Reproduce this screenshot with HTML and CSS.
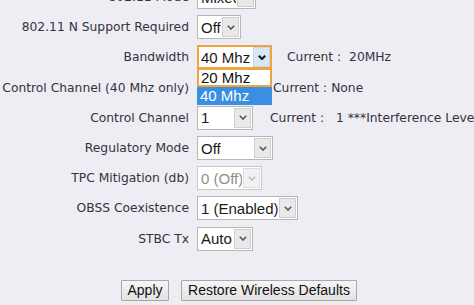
FILE: index.html
```html
<!DOCTYPE html>
<html>
<head>
<meta charset="utf-8">
<link rel="stylesheet" href="styles.css">
</head>
<body>
<div class="form">
  <div class="label">802.11 Mode</div>
  <div class="ctl"><div class="sel w59"><span class="st">Mixed</span><span class="sb"><svg width="8" height="5" viewBox="0 0 8 5"><polyline points="0.8,0.8 4,4 7.2,0.8"/></svg></span></div></div>

  <div class="label">802.11 N Support Required</div>
  <div class="ctl"><div class="sel w44"><span class="st">Off</span><span class="sb"><svg width="8" height="5" viewBox="0 0 8 5"><polyline points="0.8,0.8 4,4 7.2,0.8"/></svg></span></div></div>

  <div class="label">Bandwidth</div>
  <div class="ctl">
    <div class="selwrap">
      <div class="sel w75 focus"><span class="st">40 Mhz</span><span class="sb"><svg width="8" height="5" viewBox="0 0 8 5"><polyline points="0.8,0.8 4,4 7.2,0.8"/></svg></span></div>
      <div class="menu">
        <div class="opt hov">20 Mhz</div>
        <div class="opt sel-opt">40 Mhz</div>
      </div>
    </div>
    <span class="cur g15">Current :&nbsp; 20MHz</span>
  </div>

  <div class="label">Control Channel (40 Mhz only)</div>
  <div class="ctl"><div class="sel w60"><span class="st"></span><span class="sb"><svg width="8" height="5" viewBox="0 0 8 5"><polyline points="0.8,0.8 4,4 7.2,0.8"/></svg></span></div><span class="cur g16">Current : None</span></div>

  <div class="label">Control Channel</div>
  <div class="ctl"><div class="sel w56"><span class="st">1</span><span class="sb"><svg width="8" height="5" viewBox="0 0 8 5"><polyline points="0.8,0.8 4,4 7.2,0.8"/></svg></span></div><span class="cur g17">Current :&nbsp;&nbsp; 1 ***Interference Level</span></div>

  <div class="label">Regulatory Mode</div>
  <div class="ctl"><div class="sel w76"><span class="st">Off</span><span class="sb"><svg width="8" height="5" viewBox="0 0 8 5"><polyline points="0.8,0.8 4,4 7.2,0.8"/></svg></span></div></div>

  <div class="label">TPC Mitigation (db)</div>
  <div class="ctl"><div class="sel w65 dis"><span class="st">0 (Off)</span><span class="sb"><svg width="8" height="5" viewBox="0 0 8 5"><polyline points="0.8,0.8 4,4 7.2,0.8"/></svg></span></div></div>

  <div class="label">OBSS Coexistence</div>
  <div class="ctl"><div class="sel w101"><span class="st">1 (Enabled)</span><span class="sb"><svg width="8" height="5" viewBox="0 0 8 5"><polyline points="0.8,0.8 4,4 7.2,0.8"/></svg></span></div></div>

  <div class="label">STBC Tx</div>
  <div class="ctl"><div class="sel w56"><span class="st">Auto</span><span class="sb"><svg width="8" height="5" viewBox="0 0 8 5"><polyline points="0.8,0.8 4,4 7.2,0.8"/></svg></span></div></div>
</div>
<div class="buttons">
  <button class="btn apply">Apply</button>
  <button class="btn restore">Restore Wireless Defaults</button>
</div>
</body>
</html>
```

FILE: styles.css
```css
html, body {
  margin: 0;
  padding: 0;
  background: #eeedf3;
  overflow: hidden;
}
body {
  width: 474px;
  height: 305px;
  font-family: "DejaVu Sans", Verdana, sans-serif;
  font-size: 12.3px;
  color: #35323d;
}
.form {
  margin-top: -18px;
  display: grid;
  grid-template-columns: 189px auto;
  grid-auto-rows: 30.2px;
  column-gap: 8px;
  align-items: center;
}
.label {
  text-align: right;
  white-space: nowrap;
  justify-self: end;
}
.ctl {
  display: flex;
  align-items: center;
  white-space: nowrap;
}
.selwrap {
  position: relative;
  display: flex;
}
.sel {
  box-sizing: border-box;
  height: 24px;
  display: flex;
  align-items: stretch;
  background: #ffffff;
  border: 1px solid #b7b7b7;
  font-family: "Liberation Sans", Arial, sans-serif;
  font-size: 15px;
  color: #1a1a1a;
  flex-shrink: 0;
}
.st {
  flex: 1;
  display: flex;
  align-items: center;
  padding-left: 3px;
  overflow: hidden;
}
.sb {
  width: 17px;
  margin: 1px;
  box-sizing: border-box;
  background: #e9e9e9;
  border: 1px solid #cfcfcf;
  display: flex;
  align-items: center;
  justify-content: center;
}
.sb svg polyline {
  fill: none;
  stroke: #555;
  stroke-width: 1.6;
}
.w44 { width: 44px; }
.w59 { width: 59px; }
.w56 { width: 56px; }
.w60 { width: 60px; }
.w65 { width: 65px; }
.w75 { width: 75px; }
.w76 { width: 76px; }
.w101 { width: 101px; }
.focus {
  border: 2px solid #eea53d;
}
.focus .st { padding-left: 2px; }
.focus .sb {
  margin: 0;
  background: #d6e8f8;
  border: 1px solid #c2d9ee;
}
.focus .sb svg polyline { stroke: #111; stroke-width: 2; }
.dis { border-color: #c9c9c9; }
.dis .st { color: #8e8e8e; }
.dis .sb { background: #f2f2f2; border-color: #dedede; }
.dis .sb svg polyline { stroke: #bbb; }
.menu {
  position: absolute;
  left: 0;
  top: 23px;
  width: 75px;
  box-sizing: border-box;
  font-family: "Liberation Sans", Arial, sans-serif;
  font-size: 15px;
  z-index: 2;
}
.opt {
  height: 18px;
  line-height: 18px;
  padding-left: 3px;
  box-sizing: border-box;
}
.opt.hov {
  height: 19px;
  line-height: 15px;
  background: #fff;
  color: #111;
  border: 2px solid #eea53d;
  padding-left: 2px;
}
.opt.sel-opt {
  background: #3b8fe3;
  color: #fff;
}
.cur { font-size: 12.3px; }
.g15 { margin-left: 15px; }
.g16 { margin-left: 16px; }
.g17 { margin-left: 17px; }
.buttons {
  margin-top: 26px;
  display: flex;
  gap: 12px;
  padding-left: 121px;
}
.btn {
  box-sizing: border-box;
  height: 21px;
  padding: 0 5px;
  background: linear-gradient(#f6f6f6, #e2e2e2);
  border: 1px solid #a9a9a9;
  border-radius: 1px;
  font-family: "Liberation Sans", Arial, sans-serif;
  font-size: 14px;
  color: #111;
}
.apply { width: 48px; }
.restore { width: 176px; }
```
